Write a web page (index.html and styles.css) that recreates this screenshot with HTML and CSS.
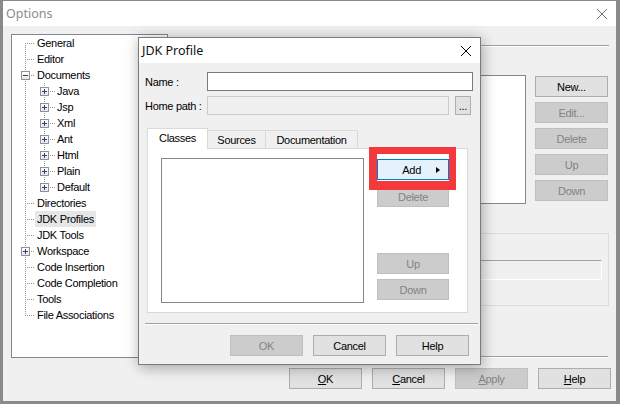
FILE: index.html
```html
<!DOCTYPE html>
<html lang="en">
<head>
  <meta charset="UTF-8" />
  <title>Options</title>
  <link rel="stylesheet" href="styles.css">
</head>
<body>

<div class="window">
  <div class="titlebar">
    <span class="title">Options</span>
    <svg class="close" width="10" height="10" viewBox="0 0 10 10"><path d="M0 0L10 10M10 0L0 10"/></svg>
  </div>

  <div class="content">
    <div class="main">
      <div class="tree">
        <div class="row"><span class="ln first"></span><span class="label">General</span></div>
        <div class="row"><span class="ln"></span><span class="label">Editor</span></div>
        <div class="row"><span class="ln"><span class="exp"></span></span><span class="label">Documents</span></div>
        <div class="row"><span class="ln pass"></span><span class="ln2"><span class="exp plus"></span></span><span class="label">Java</span></div>
        <div class="row"><span class="ln pass"></span><span class="ln2"><span class="exp plus"></span></span><span class="label">Jsp</span></div>
        <div class="row"><span class="ln pass"></span><span class="ln2"><span class="exp plus"></span></span><span class="label">Xml</span></div>
        <div class="row"><span class="ln pass"></span><span class="ln2"><span class="exp plus"></span></span><span class="label">Ant</span></div>
        <div class="row"><span class="ln pass"></span><span class="ln2"><span class="exp plus"></span></span><span class="label">Html</span></div>
        <div class="row"><span class="ln pass"></span><span class="ln2"><span class="exp plus"></span></span><span class="label">Plain</span></div>
        <div class="row"><span class="ln pass"></span><span class="ln2 last"><span class="exp plus"></span></span><span class="label">Default</span></div>
        <div class="row"><span class="ln"></span><span class="label">Directories</span></div>
        <div class="row"><span class="ln"></span><span class="label selected">JDK Profiles</span></div>
        <div class="row"><span class="ln"></span><span class="label">JDK Tools</span></div>
        <div class="row"><span class="ln"><span class="exp plus"></span></span><span class="label">Workspace</span></div>
        <div class="row"><span class="ln"></span><span class="label">Code Insertion</span></div>
        <div class="row"><span class="ln"></span><span class="label">Code Completion</span></div>
        <div class="row"><span class="ln"></span><span class="label">Tools</span></div>
        <div class="row"><span class="ln last"></span><span class="label">File Associations</span></div>
      </div>

      <div class="panel">
        <div class="panel-head"><div class="rule"></div></div>
        <div class="list-row">
          <div class="list"></div>
          <div class="side-buttons">
            <button class="btn">New...</button>
            <button class="btn" disabled>Edit...</button>
            <button class="btn" disabled>Delete</button>
            <button class="btn" disabled>Up</button>
            <button class="btn" disabled>Down</button>
          </div>
        </div>
        <div class="group">
          <div class="static-field"></div>
        </div>
        <div class="rule bottom-rule"></div>
      </div>
    </div>

    <div class="footer">
      <button class="btn"><u>O</u>K</button>
      <button class="btn"><u>C</u>ancel</button>
      <button class="btn" disabled><u>A</u>pply</button>
      <button class="btn"><u>H</u>elp</button>
    </div>
  </div>

  <div class="dialog">
    <div class="dlg-titlebar">
      <span class="dlg-title">JDK Profile</span>
      <svg class="dlg-close" width="10" height="10" viewBox="0 0 10 10"><path d="M0 0L10 10M10 0L0 10"/></svg>
    </div>

    <div class="dlg-body">
      <div class="field">
        <label>Name :</label>
        <input type="text" class="edit">
      </div>
      <div class="field home-row">
        <label>Home path :</label>
        <input type="text" class="edit" disabled>
        <button class="btn browse">...</button>
      </div>

      <div class="tabs">
        <div class="tab active">Classes</div>
        <div class="tab">Sources</div>
        <div class="tab">Documentation</div>
      </div>
      <div class="tab-panel">
        <div class="list inner-list"></div>
        <div class="tab-buttons">
          <button class="btn add-btn"><span>Add</span><span class="arrow"></span></button>
          <button class="btn" disabled>Delete</button>
          <button class="btn btn-gap" disabled>Up</button>
          <button class="btn" disabled>Down</button>
        </div>
      </div>

      <div class="rule dlg-rule"></div>

      <div class="dlg-footer">
        <button class="btn" disabled>OK</button>
        <button class="btn">Cancel</button>
        <button class="btn">Help</button>
      </div>
    </div>

    <div class="marker"></div>
  </div>
</div>

</body>
</html>
```

FILE: styles.css
```css
body {
  margin: 0;
  font-family: "Liberation Sans", Arial, sans-serif;
  font-size: 11px;
  letter-spacing: -0.3px;
  color: #000;
}

.window {
  position: relative;
  width: 620px;
  height: 404px;
  box-sizing: border-box;
  border-style: solid;
  border-color: #8a8a8a;
  border-width: 1px 4px 3px 3px;
  background: #f0f0f0;
  display: flex;
  flex-direction: column;
  overflow: hidden;
}

.titlebar {
  height: 25px;
  flex: none;
  background: #fff;
  display: flex;
  align-items: center;
  justify-content: space-between;
  padding: 0 9px 0 3px;
}

.title {
  font-family: "Noto Sans", "Liberation Sans", sans-serif;
  font-size: 12.5px;
  letter-spacing: 0;
  color: #8c8c8c;
}

.close path {
  stroke: #707070;
  stroke-width: 1;
}

.content {
  flex: 1;
  display: flex;
  flex-direction: column;
  padding: 8px 5px 0 8px;
}

.main {
  display: flex;
  gap: 8px;
  height: 324px;
}

/* tree */
.tree {
  width: 157px;
  flex: none;
  box-sizing: border-box;
  border: 1px solid #828790;
  background: #fff;
}

.row {
  display: flex;
  height: 16px;
  line-height: 16px;
  white-space: nowrap;
}

.ln, .ln2 {
  flex: none;
  display: block;
  height: 16px;
  background-image:
    repeating-linear-gradient(to bottom, #959595 0 1px, transparent 1px 2px),
    repeating-linear-gradient(to right, #959595 0 1px, transparent 1px 2px);
  background-repeat: no-repeat;
}

.ln {
  width: 23px;
  background-size: 1px 16px, 10px 1px;
  background-position: 13px 0, 13px 8px;
}

.ln.first {
  background-size: 1px 8px, 10px 1px;
  background-position: 13px 8px, 13px 8px;
}

.ln.last {
  background-size: 1px 9px, 10px 1px;
}

.ln.pass {
  background-size: 1px 16px, 0 0;
}

.ln2 {
  width: 20px;
  background-size: 1px 16px, 11px 1px;
  background-position: 9px 0, 9px 8px;
}

.ln2.last {
  background-size: 1px 9px, 11px 1px;
}

.exp {
  display: block;
  width: 9px;
  height: 9px;
  box-sizing: border-box;
  margin: 4px 0 0 9px;
  border: 1px solid #919191;
  background:
    linear-gradient(#23447e, #23447e) center / 5px 1px no-repeat,
    linear-gradient(#ffffff, #e6e6e6);
}

.exp.plus {
  background:
    linear-gradient(#23447e, #23447e) center / 5px 1px no-repeat,
    linear-gradient(#23447e, #23447e) center / 1px 5px no-repeat,
    linear-gradient(#ffffff, #e6e6e6);
}

.ln2 .exp {
  margin-left: 5px;
}

.label {
  padding: 0 2px;
}

.label.selected {
  background: #e6e6e6;
}

/* right panel */
.panel {
  flex: 1;
  display: flex;
  flex-direction: column;
  margin-right: 2px;
  padding-left: 8px;
}

.panel-head {
  height: 22px;
  display: flex;
}

.rule {
  border-top: 1px solid #a0a0a0;
  border-bottom: 1px solid #fff;
}

.panel-head .rule {
  flex: 1;
  margin-top: 11px;
  align-self: flex-start;
}

.list-row {
  display: flex;
  gap: 9px;
  margin: 19px 1px 0 0;
}

.list {
  flex: 1;
  height: 129px;
  box-sizing: border-box;
  border: 1px solid #828790;
  background: #fff;
}

.side-buttons {
  width: 73px;
  display: flex;
  flex-direction: column;
  gap: 5px;
  margin-top: 1px;
}

.group {
  margin-top: 29px;
  height: 73px;
  box-sizing: border-box;
  border: 1px solid #dcdcdc;
  padding: 26px 6px 0 12px;
}

.static-field {
  height: 20px;
  box-sizing: border-box;
  border-top: 1px solid #a0a0a0;
  border-left: 1px solid #a0a0a0;
  border-right: 1px solid #fff;
  border-bottom: 1px solid #fff;
}

.bottom-rule {
  margin: auto 1px 0 0;
}

.footer {
  display: flex;
  justify-content: flex-end;
  gap: 10px;
  margin-top: 10px;
}

/* buttons */
.btn {
  width: 73px;
  height: 21px;
  box-sizing: border-box;
  padding: 0;
  margin: 0;
  font-family: inherit;
  font-size: 11px;
  letter-spacing: -0.3px;
  color: #000;
  background: #e1e1e1;
  border: 1px solid #adadad;
  border-radius: 0;
}

.btn:disabled {
  background: #cccccc;
  border-color: #bfbfbf;
  color: #838383;
}

.btn u {
  text-underline-offset: 1px;
}

/* dialog */
.dialog {
  position: absolute;
  left: 135px;
  top: 36px;
  width: 343px;
  height: 328px;
  box-sizing: border-box;
  border: 1px solid #7a7a7a;
  background: #f0f0f0;
  box-shadow: 0 0 14px rgba(0, 0, 0, 0.2), 3px 5px 12px rgba(0, 0, 0, 0.15);
}

.dlg-titlebar {
  height: 25px;
  background: #fff;
  display: flex;
  align-items: center;
  justify-content: space-between;
  padding: 0 9px 0 3px;
}

.dlg-title {
  font-family: "Noto Sans", "Liberation Sans", sans-serif;
  font-size: 12.5px;
  letter-spacing: 0;
  color: #111;
}

.dlg-close path {
  stroke: #000;
  stroke-width: 1;
}

.dlg-body {
  padding: 9px 7px 0 6px;
}

.field {
  display: flex;
  align-items: center;
  height: 19px;
}

.field + .field {
  margin-top: 5px;
}

.field label {
  width: 62px;
  flex: none;
}

.edit {
  flex: 1;
  height: 19px;
  box-sizing: border-box;
  margin: 0;
  border: 1px solid #7a7a7a;
  background: #fff;
  font: inherit;
}

.edit:disabled {
  border-color: #cccccc;
  background: #f0f0f0;
}

.browse {
  width: 16px;
  height: 19px;
  margin: 0 2px 0 6px;
  line-height: 14px;
}

.tabs {
  display: flex;
  align-items: flex-end;
  height: 20px;
  margin: 13px 0 0 2px;
}

.tab {
  height: 18px;
  box-sizing: border-box;
  border: 1px solid #d9d9d9;
  border-bottom: none;
  background: #f0f0f0;
  text-align: center;
  line-height: 18px;
}

.tab + .tab {
  margin-left: -1px;
}

.tab:nth-child(1) { width: 61px; }
.tab:nth-child(2) { width: 59px; }
.tab:nth-child(3) { width: 93px; }

.tab.active {
  position: relative;
  z-index: 1;
  height: 21px;
  margin-bottom: -1px;
  background: #fff;
  line-height: 18px;
}

.tab-panel {
  height: 165px;
  width: 321px;
  box-sizing: border-box;
  margin-left: 2px;
  border: 1px solid #d9d9d9;
  background: #fff;
  display: flex;
  gap: 13px;
  padding: 9px 0 0 13px;
}

.inner-list {
  flex: none;
  width: 203px;
  height: 145px;
}

.tab-buttons {
  width: 72px;
  display: flex;
  flex-direction: column;
  gap: 6px;
  margin-top: 1px;
}

.tab-buttons .btn {
  width: 72px;
}

.tab-buttons .btn-gap {
  margin-top: 40px;
}

.tab-buttons .btn-gap + .btn {
  margin-top: -1px;
}

.add-btn {
  display: flex;
  align-items: center;
  justify-content: flex-end;
  gap: 15px;
  padding-right: 8px;
  background: #e5f1fb;
  border-color: #0078d7;
}

.arrow {
  width: 0;
  height: 0;
  border-left: 4px solid #000;
  border-top: 3.5px solid transparent;
  border-bottom: 3.5px solid transparent;
}

.dlg-rule {
  margin: 10px -5px 0 0;
}

.dlg-footer {
  display: flex;
  justify-content: flex-end;
  gap: 10px;
  margin-top: 10px;
  padding-right: 4px;
}

/* red annotation box around Add */
.marker {
  position: absolute;
  left: 230px;
  top: 109px;
  width: 87px;
  height: 43px;
  box-sizing: border-box;
  border-style: solid;
  border-color: #f4393c;
  border-width: 7px 7px 9px 8px;
}
```
